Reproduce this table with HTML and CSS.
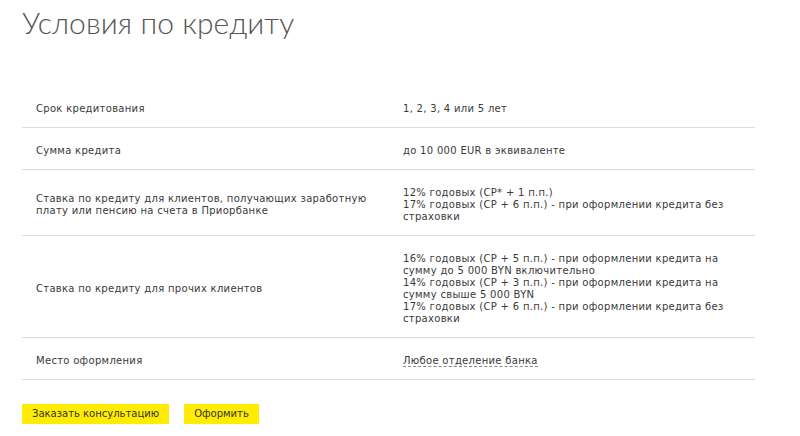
FILE: index.html
```html
<!DOCTYPE html>
<html lang="ru">
<head>
<meta charset="utf-8">
<link rel="stylesheet" href="styles.css">
</head>
<body>
<div class="page">
  <h1 class="title">Условия по кредиту</h1>
  <div class="table">
    <div class="row">
      <div class="label">Срок кредитования</div>
      <div class="value">1, 2, 3, 4 или 5 лет</div>
    </div>
    <div class="row">
      <div class="label">Сумма кредита</div>
      <div class="value">до 10 000 EUR в эквиваленте</div>
    </div>
    <div class="row">
      <div class="label">Ставка по кредиту для клиентов, получающих заработную плату или пенсию на счета в Приорбанке</div>
      <div class="value">12% годовых (СР* + 1 п.п.)<br>17% годовых (СР + 6 п.п.) - при оформлении кредита без страховки</div>
    </div>
    <div class="row">
      <div class="label">Ставка по кредиту для прочих клиентов</div>
      <div class="value">16% годовых (СР + 5 п.п.) - при оформлении кредита на сумму до 5 000 BYN включительно<br>14% годовых (СР + 3 п.п.) - при оформлении кредита на сумму свыше 5 000 BYN<br>17% годовых (СР + 6 п.п.) - при оформлении кредита без страховки</div>
    </div>
    <div class="row">
      <div class="label">Место оформления</div>
      <div class="value"><span class="dotted">Любое отделение банка</span></div>
    </div>
  </div>
  <div class="actions">
    <span class="btn">Заказать консультацию</span>
    <span class="btn">Оформить</span>
  </div>
</div>
</body>
</html>
```
FILE: styles.css
```css
html, body {
  margin: 0;
  padding: 0;
  background: #fff;
}
.page {
  padding: 0 45px 0 22px;
  font-family: "DejaVu Sans", Verdana, sans-serif;
  font-size: 10px;
  color: #3a3a3a;
}
.title {
  margin: 0;
  padding-top: 2px;
  height: 86px;
  box-sizing: border-box;
  font-family: Lato, "Open Sans", sans-serif;
  font-weight: 300;
  font-size: 30px;
  line-height: 40px;
  color: #555;
  letter-spacing: 0.1px;
}
.table {
  display: flex;
  flex-direction: column;
}
.row {
  display: grid;
  grid-template-columns: 381px 1fr;
  align-items: center;
  border-bottom: 1px solid #dcdcdc;
  padding: 17px 0 12px;
  line-height: 12px;
  letter-spacing: 0.3px;
}
.label {
  padding-left: 14px;
  padding-right: 18px;
}
.value {
  padding-right: 28px;
}
.dotted {
  border-bottom: 1px dashed #888;
}
.actions {
  display: flex;
  gap: 15px;
  margin-top: 24px;
}
.btn {
  background: #ffec00;
  height: 20px;
  line-height: 20px;
  padding: 0 10px;
  color: #333;
  font-size: 10px;
}
```
